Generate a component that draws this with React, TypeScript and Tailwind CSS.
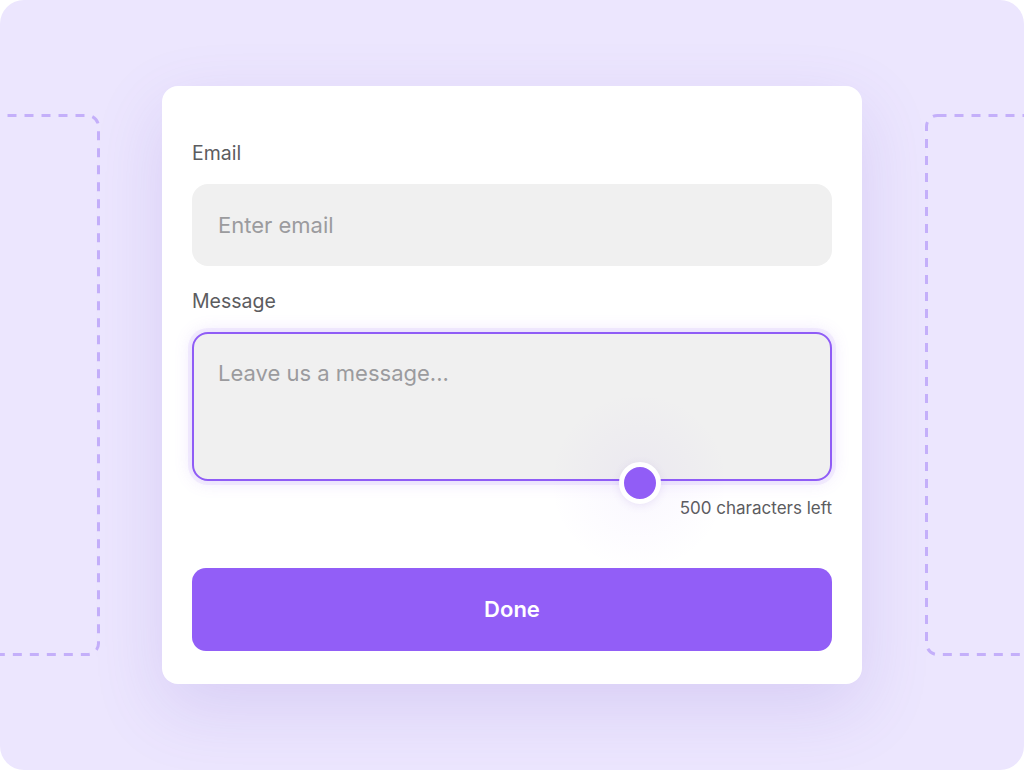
import { useState } from 'react';

function GhostField({ className }: { className: string }) {
  return (
    <div className={className}>
      <svg width="100%" height="100%" className="block overflow-visible">
        <rect
          x="1.5"
          y="1.5"
          width="119"
          height="539"
          rx="11"
          fill="none"
          stroke="#C4AFFA"
          strokeWidth="3"
          strokeDasharray="9 8"
        />
      </svg>
    </div>
  );
}

export default function App() {
  const [email, setEmail] = useState('');
  const [message, setMessage] = useState('');
  const left = 500 - message.length;

  return (
    <div className="w-[1024px] h-[770px] bg-white font-['Inter',sans-serif]">
      <div className="w-full h-full rounded-[24px] bg-[#ECE6FE] overflow-hidden flex items-center">
        <GhostField className="w-[122px] h-[542px] -ml-[22px] shrink-0" />

        {/* Card */}
        <div className="ml-[62px] w-[700px] shrink-0 bg-white rounded-[16px] shadow-[0_24px_70px_rgba(110,80,200,0.16)] px-[30px] pt-[55px] pb-[33px]">
          <label className="block text-[19.5px] leading-[24px] text-[#5c5c5f] mb-[19px]">Email</label>
          <input
            value={email}
            onChange={(e) => setEmail(e.target.value)}
            placeholder="Enter email"
            className="w-full h-[82px] rounded-[16px] bg-[#F0F0F0] px-[26px] text-[22px] text-[#444] placeholder:text-[#9B9B9E] outline-none"
          />

          <label className="block text-[19.5px] leading-[24px] text-[#5c5c5f] mt-[23px] mb-[19px]">Message</label>
          <div className="relative">
            <textarea
              value={message}
              onChange={(e) => setMessage(e.target.value.slice(0, 500))}
              placeholder="Leave us a message..."
              className="block w-full h-[149px] resize-none rounded-[16px] bg-[#F0F0F0] border-2 border-[#8F5CF6] px-[24px] pt-[25px] text-[22px] leading-[28px] text-[#444] placeholder:text-[#9B9B9E] outline-none shadow-[0_0_0_4px_rgba(143,92,246,0.08),0_0_18px_rgba(143,92,246,0.18)]"
            />
            <div className="absolute left-[357px] top-[60px] w-[180px] h-[180px] rounded-full bg-[radial-gradient(circle,rgba(143,92,246,0.05),rgba(143,92,246,0)_70%)] pointer-events-none" />
            <div className="absolute left-[427px] top-[130px] w-[42px] h-[42px] rounded-full bg-[#915DF6] border-[5px] border-white shadow-[0_2px_8px_rgba(120,80,200,0.12)]" />
          </div>
          <div className="text-right text-[17px] leading-[20px] text-[#5c5c5f] mt-[17px]">
            {left} characters left
          </div>

          <button className="mt-[50px] w-full h-[83px] rounded-[14px] bg-[#925EF7] text-white text-[22px] font-semibold">
            Done
          </button>
        </div>

        <GhostField className="ml-[63px] w-[122px] h-[542px] shrink-0" />
      </div>
    </div>
  );
}
